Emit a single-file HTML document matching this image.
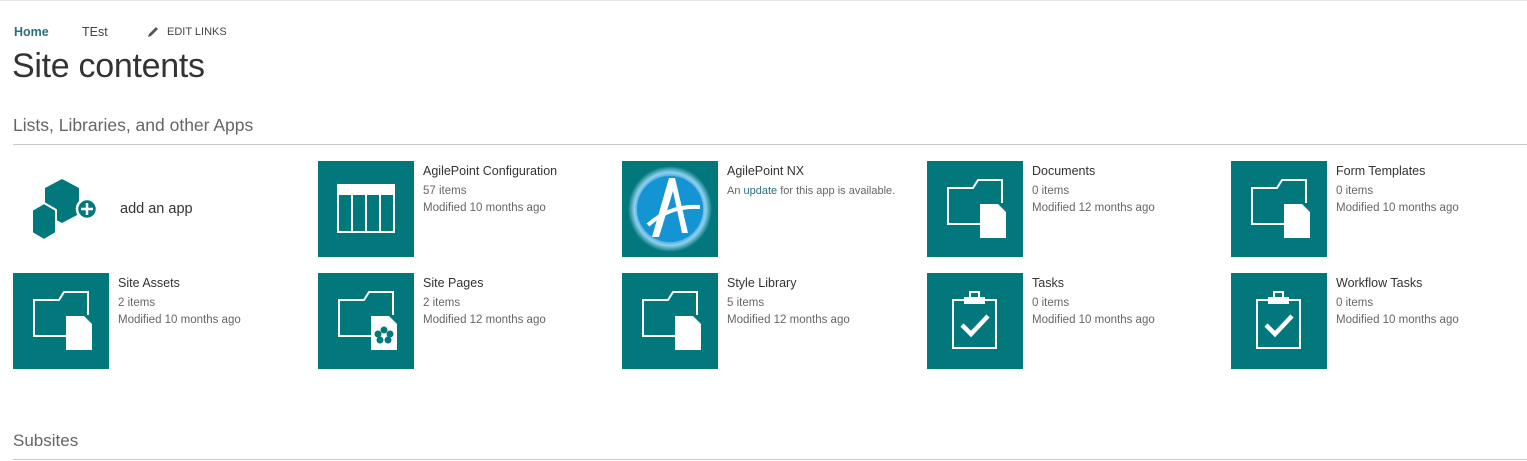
<!DOCTYPE html>
<html><head><meta charset="utf-8"><style>
body{margin:0;width:1527px;height:461px;background:#fff;font-family:"Segoe UI","Liberation Sans",sans-serif;color:#333;position:relative;overflow:hidden}
.topline{position:absolute;left:0;top:0;width:1527px;height:1px;background:#e6e6e6}
.t{position:absolute;white-space:nowrap}
.tile{position:absolute;width:96px;height:96px;background:#03787c}
.tile svg{position:absolute;left:0;top:0}
.name{position:absolute;font-size:12.5px;color:#333;white-space:nowrap}
.meta{position:absolute;font-size:11.5px;color:#666;white-space:nowrap;line-height:17px}
.hr{position:absolute;left:13px;width:1514px;height:1px;background:#c8c8c8}
</style></head><body>
<div class="topline"></div>
<div class="t" style="left:14px;top:25px;font-size:12.5px;font-weight:bold;color:#2a6f7f">Home</div>
<div class="t" style="left:82px;top:25px;font-size:12.5px;color:#444">TEst</div>
<svg class="t" style="left:147px;top:26px" width="12" height="12" viewBox="0 0 12 12"><path d="M1 11 L2 8 L9 1 L11 3 L4 10 Z" fill="#555"/></svg>
<div class="t" style="left:167px;top:26px;font-size:11px;color:#444">EDIT LINKS</div>
<div class="t" style="left:12px;top:47px;font-size:34px;color:#333;letter-spacing:-0.3px">Site contents</div>
<div class="t" style="left:13px;top:115px;font-size:17.5px;color:#666">Lists, Libraries, and other Apps</div>
<div class="hr" style="top:144px"></div>
<div class="t" style="left:13px;top:431px;font-size:17px;color:#666">Subsites</div>
<div class="hr" style="top:459px"></div>

<!-- add an app -->
<svg style="position:absolute;left:28px;top:178px" width="72" height="64" viewBox="0 0 72 64">
<polygon points="34,1 51,10 51,36 34,45 17,36 17,10" fill="#03787c"/>
<polygon points="16,25 28,32 28,55 16,62 4,55 4,32" fill="#03787c" stroke="#fff" stroke-width="2"/>
<circle cx="59" cy="31" r="10" fill="#03787c" stroke="#fff" stroke-width="2.5"/>
<path d="M59 25 V37 M53 31 H65" stroke="#fff" stroke-width="2.5"/>
</svg>
<div class="t" style="left:120px;top:201px;font-size:14.5px;color:#333">add an app</div>

<!-- row 1 -->
<div class="tile" style="left:318px;top:161px"><svg width="96" height="96"><rect x="19" y="24" width="58" height="10" fill="#fff"/><rect x="20" y="24" width="56" height="47" fill="none" stroke="#fff" stroke-width="2"/><path d="M34 33 V71 M48 33 V71 M62 33 V71" stroke="#fff" stroke-width="2"/></svg></div>
<div class="name" style="left:423px;top:164px">AgilePoint Configuration</div>
<div class="meta" style="left:423px;top:183px">57 items<br>Modified 10 months ago</div>

<div class="tile" style="left:622px;top:161px"><svg width="96" height="96"><defs><radialGradient id="g"><stop offset="0.7" stop-color="#1a8fd0"/><stop offset="0.85" stop-color="#8fd0f0"/><stop offset="1" stop-color="#03787c"/></radialGradient></defs><ellipse cx="48" cy="48" rx="42" ry="43" fill="url(#g)"/><circle cx="48" cy="48" r="33" fill="#1594d4"/><path d="M30 76 L47 17 H53 L66 72 H60 L51 30 L37 76 Z" fill="#fff"/><path d="M26 64 Q48 44 78 46" stroke="#fff" stroke-width="4" fill="none"/></svg></div>
<div class="name" style="left:727px;top:164px">AgilePoint NX</div>
<div class="meta" style="left:727px;top:183px;font-size:11px">An <span style="color:#2a6f7f">update</span> for this app is available.</div>

<div class="tile" style="left:927px;top:161px"><svg width="96" height="96"><path d="M53 63 H21 V27 H46 L51 19 H75 V42" fill="none" stroke="#fff" stroke-width="2"/><path d="M53 43 H71 L79 51 V77 H53 Z" fill="#fff"/></svg></div>
<div class="name" style="left:1032px;top:164px">Documents</div>
<div class="meta" style="left:1032px;top:183px">0 items<br>Modified 12 months ago</div>

<div class="tile" style="left:1231px;top:161px"><svg width="96" height="96"><path d="M53 63 H21 V27 H46 L51 19 H75 V42" fill="none" stroke="#fff" stroke-width="2"/><path d="M53 43 H71 L79 51 V77 H53 Z" fill="#fff"/></svg></div>
<div class="name" style="left:1336px;top:164px">Form Templates</div>
<div class="meta" style="left:1336px;top:183px">0 items<br>Modified 10 months ago</div>

<!-- row 2 -->
<div class="tile" style="left:13px;top:273px"><svg width="96" height="96"><path d="M53 63 H21 V27 H46 L51 19 H75 V42" fill="none" stroke="#fff" stroke-width="2"/><path d="M53 43 H71 L79 51 V77 H53 Z" fill="#fff"/></svg></div>
<div class="name" style="left:118px;top:276px">Site Assets</div>
<div class="meta" style="left:118px;top:295px">2 items<br>Modified 10 months ago</div>

<div class="tile" style="left:318px;top:273px"><svg width="96" height="96"><path d="M53 63 H21 V27 H46 L51 19 H75 V42" fill="none" stroke="#fff" stroke-width="2"/><path d="M53 43 H71 L79 51 V77 H53 Z" fill="#fff"/><g fill="#03787c"><circle cx="66" cy="57" r="3.5"/><circle cx="60" cy="61" r="3.5"/><circle cx="72" cy="61" r="3.5"/><circle cx="62" cy="67" r="3.5"/><circle cx="70" cy="67" r="3.5"/></g></svg></div>
<div class="name" style="left:423px;top:276px">Site Pages</div>
<div class="meta" style="left:423px;top:295px">2 items<br>Modified 12 months ago</div>

<div class="tile" style="left:622px;top:273px"><svg width="96" height="96"><path d="M53 63 H21 V27 H46 L51 19 H75 V42" fill="none" stroke="#fff" stroke-width="2"/><path d="M53 43 H71 L79 51 V77 H53 Z" fill="#fff"/></svg></div>
<div class="name" style="left:727px;top:276px">Style Library</div>
<div class="meta" style="left:727px;top:295px">5 items<br>Modified 12 months ago</div>

<div class="tile" style="left:927px;top:273px"><svg width="96" height="96"><path d="M38 27 H26 V75 H69 V27 H57" fill="none" stroke="#fff" stroke-width="2"/><rect x="37" y="24" width="21" height="7" fill="#fff"/><rect x="43" y="19" width="9" height="6" fill="none" stroke="#fff" stroke-width="2"/><path d="M35 52 L44 61 L61 43" fill="none" stroke="#fff" stroke-width="4.5"/></svg></div>
<div class="name" style="left:1032px;top:276px">Tasks</div>
<div class="meta" style="left:1032px;top:295px">0 items<br>Modified 10 months ago</div>

<div class="tile" style="left:1231px;top:273px"><svg width="96" height="96"><path d="M38 27 H26 V75 H69 V27 H57" fill="none" stroke="#fff" stroke-width="2"/><rect x="37" y="24" width="21" height="7" fill="#fff"/><rect x="43" y="19" width="9" height="6" fill="none" stroke="#fff" stroke-width="2"/><path d="M35 52 L44 61 L61 43" fill="none" stroke="#fff" stroke-width="4.5"/></svg></div>
<div class="name" style="left:1336px;top:276px">Workflow Tasks</div>
<div class="meta" style="left:1336px;top:295px">0 items<br>Modified 10 months ago</div>
</body></html>
